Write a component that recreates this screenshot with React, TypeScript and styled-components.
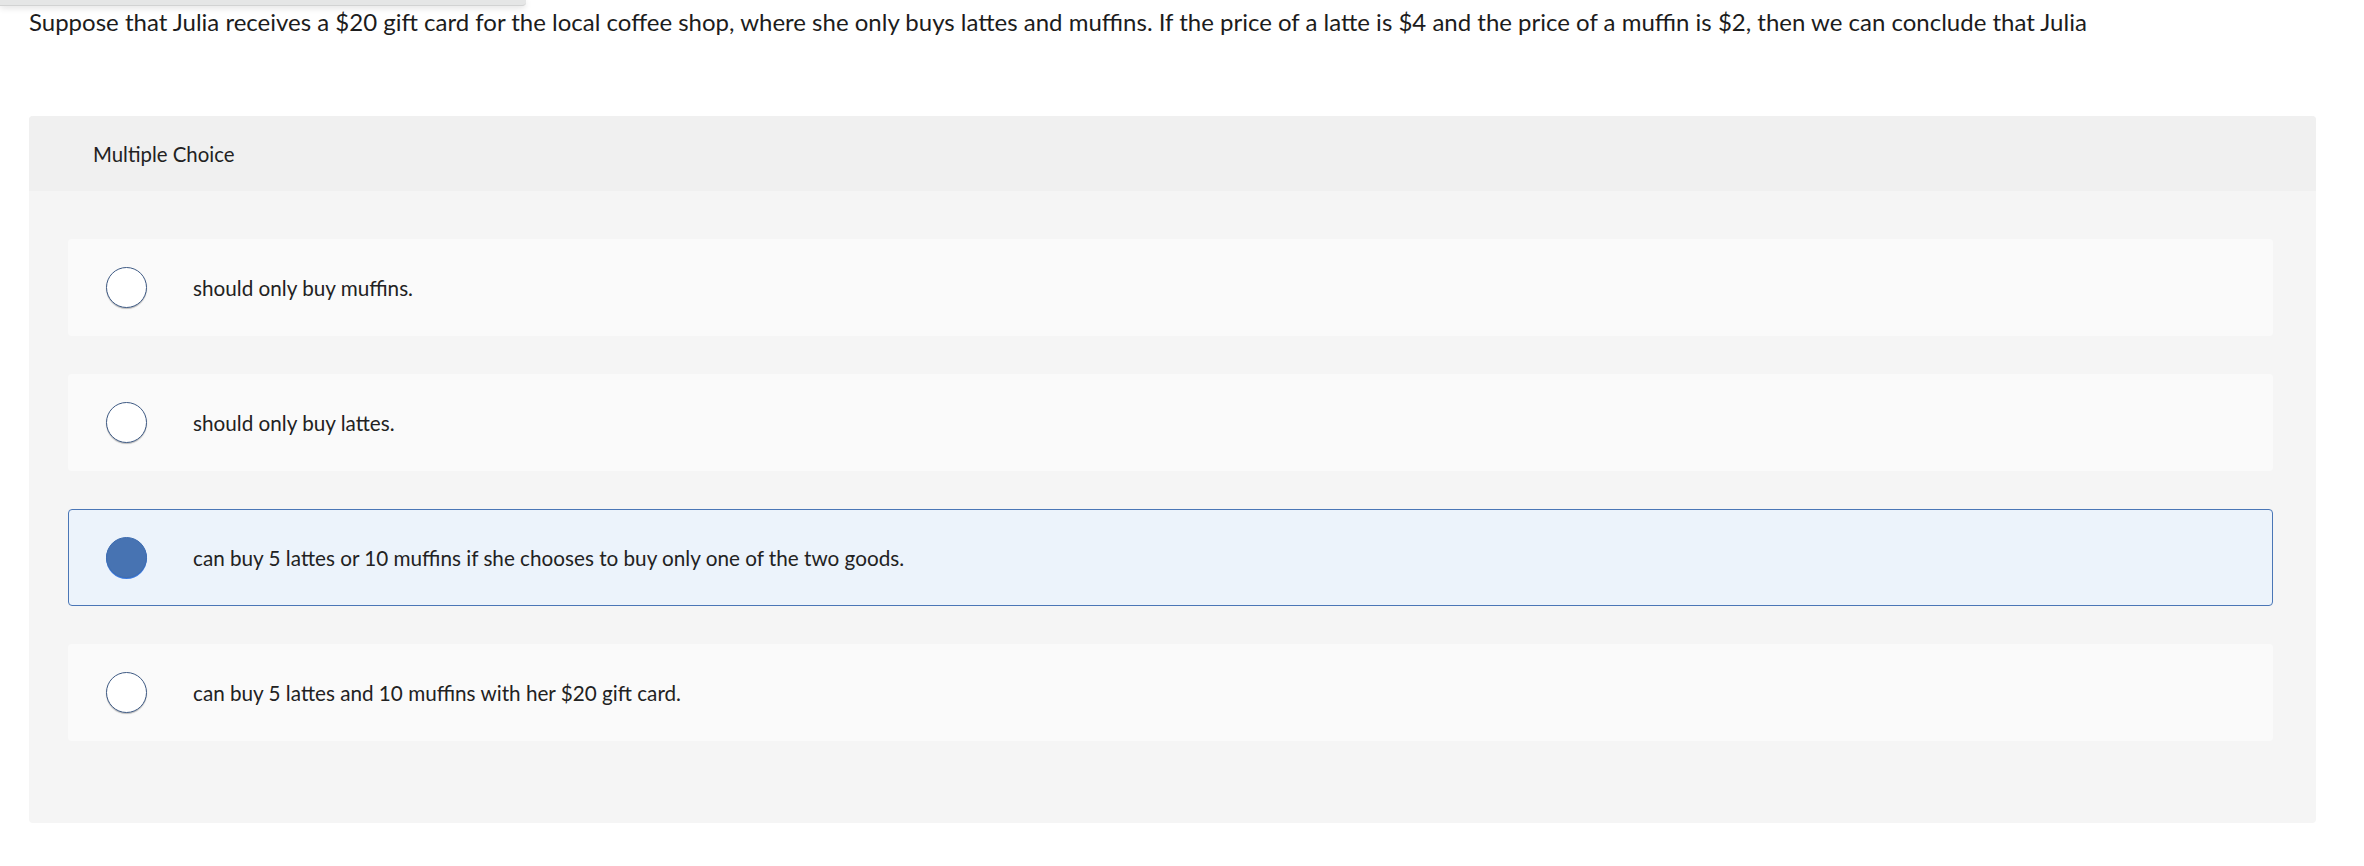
import React from "react";
import styled, { createGlobalStyle } from "styled-components";

const GlobalStyle = createGlobalStyle`
  html, body { margin: 0; padding: 0; background: #ffffff; }
  body { font-family: Lato, "Noto Sans", Arial, sans-serif; color: #1d1d1f; }
  * { box-sizing: border-box; }
`;

const TopStrip = styled.div`
  position: absolute;
  left: 0;
  top: 0;
  width: 526px;
  height: 6px;
  background: #e5e6e6;
  border-bottom: 1px solid #d2d3d3;
  border-bottom-right-radius: 4px;
  box-shadow: 0 2px 6px rgba(0, 0, 0, 0.12);
`;

const Page = styled.div`
  padding: 4px 48px 40px 29px;
`;

const Question = styled.p`
  margin: 0 0 76px 0;
  font-size: 24px;
  line-height: 36px;
  color: #1c1c1c;
`;

const Panel = styled.section`
  width: 2287px;
  border-radius: 4px;
  overflow: hidden;
  background: #f5f5f5;
`;

const PanelHeader = styled.div`
  height: 75px;
  display: flex;
  align-items: center;
  padding-left: 64px;
  background: #f0f0f0;
  font-size: 20.4px;
  color: #222;
`;

const OptionList = styled.div`
  display: flex;
  flex-direction: column;
  gap: 38px;
  padding: 48px 43px 82px 39px;
`;

const Option = styled.label<{ $selected?: boolean }>`
  height: 97px;
  display: flex;
  align-items: center;
  padding-left: 37px;
  border-radius: 4px;
  background: ${(p) => (p.$selected ? "#ecf3fb" : "#fafafa")};
  border: 1px solid ${(p) => (p.$selected ? "#4a76b6" : "transparent")};
  cursor: pointer;
`;

const Radio = styled.span<{ $checked?: boolean }>`
  flex: none;
  width: 41px;
  height: 41px;
  border-radius: 50%;
  background: ${(p) => (p.$checked ? "#4773b2" : "#ffffff")};
  border: 1.5px solid ${(p) => (p.$checked ? "#3f6db0" : "#3f5b85")};
  box-shadow: ${(p) => (p.$checked ? "0 1px 0 #3c7be0" : "0 1px 1px rgba(0,0,0,0.25)")};
`;

const OptionText = styled.span`
  margin-left: 46px;
  font-size: 20.7px;
  color: #222;
`;

const question =
  "Suppose that Julia receives a $20 gift card for the local coffee shop, where she only buys lattes and muffins. If the price of a latte is $4 and the price of a muffin is $2, then we can conclude that Julia";

const options = [
  "should only buy muffins.",
  "should only buy lattes.",
  "can buy 5 lattes or 10 muffins if she chooses to buy only one of the two goods.",
  "can buy 5 lattes and 10 muffins with her $20 gift card.",
];

export default function App() {
  return (
    <>
      <GlobalStyle />
      <TopStrip />
      <Page>
        <Question>{question}</Question>
        <Panel>
          <PanelHeader>Multiple Choice</PanelHeader>
          <OptionList>
            {options.map((o, i) => (
              <Option key={i} $selected={i === 2}>
                <Radio $checked={i === 2} />
                <OptionText>{o}</OptionText>
              </Option>
            ))}
          </OptionList>
        </Panel>
      </Page>
    </>
  );
}
